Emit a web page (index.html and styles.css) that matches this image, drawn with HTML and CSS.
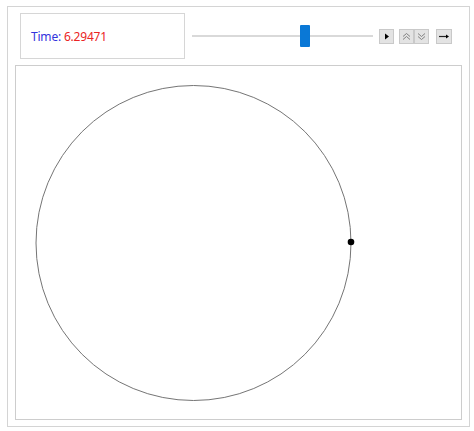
FILE: index.html
```html
<!DOCTYPE html>
<html>
<head>
<meta charset="utf-8">
<link rel="stylesheet" href="styles.css">
</head>
<body>
<div class="panel">
  <div class="header">
    <div class="timebox"><span class="text"><span class="label">Time: </span><span class="value">6.29471</span></span></div>
    <div class="slider"><div class="track"></div><div class="thumb"></div></div>
    <div class="buttons">
      <div class="btn">
        <svg width="13" height="13" viewBox="0 0 13 13"><path d="M5 3.5 L9 6.5 L5 9.5 Z" fill="#000"/></svg>
      </div>
      <div class="group">
        <div class="btn">
          <svg width="13" height="13" viewBox="0 0 13 13"><path d="M3 6.5 L6.5 3.5 L10 6.5 M3 9.5 L6.5 6.5 L10 9.5" fill="none" stroke="#777" stroke-width="0.9"/></svg>
        </div>
        <div class="btn">
          <svg width="13" height="13" viewBox="0 0 13 13"><path d="M3 3.5 L6.5 6.5 L10 3.5 M3 6.5 L6.5 9.5 L10 6.5" fill="none" stroke="#777" stroke-width="0.9"/></svg>
        </div>
      </div>
      <div class="btn wide">
        <svg width="14" height="13" viewBox="0 0 14 13"><path d="M2 6.5 H9" stroke="#222" stroke-width="1.2"/><path d="M9 4.5 L12 6.5 L9 8.5 Z" fill="#000"/></svg>
      </div>
    </div>
  </div>
  <div class="canvas">
    <svg class="plot" width="445" height="353" viewBox="0 0 445 353">
      <circle cx="177.5" cy="177" r="157.5" fill="none" stroke="#757575" stroke-width="1"/>
      <circle cx="335" cy="176" r="3.3" fill="#000"/>
    </svg>
  </div>
</div>
</body>
</html>
```
FILE: styles.css
```css
html, body {
  margin: 0;
  padding: 0;
  background: #fff;
}
.panel {
  margin: 6px 0 0 7px;
  width: 463px;
  height: 421px;
  border: 1px solid #d4d4d4;
  padding: 6px 7px;
  box-sizing: border-box;
  display: flex;
  flex-direction: column;
  gap: 6px;
}
.header {
  display: flex;
  align-items: center;
  padding-left: 5px;
  height: 46px;
}
.timebox {
  width: 165px;
  height: 46px;
  box-sizing: border-box;
  border: 1px solid #d6d6d6;
  display: flex;
  align-items: center;
  padding-left: 10px;
  font-family: "Noto Sans", "Open Sans", sans-serif;
  font-size: 12px;
  letter-spacing: -0.2px;
  white-space: pre;
}
.label { color: #3333dd; }
.value { color: #ea2424; }
.slider {
  position: relative;
  margin-left: 7px;
  width: 181px;
  height: 22px;
  display: flex;
  align-items: center;
}
.track {
  width: 100%;
  height: 2px;
  background: #d9d9d9;
}
.thumb {
  position: absolute;
  left: 108px;
  top: 0;
  width: 10px;
  height: 22px;
  background: #0a78d6;
  border-radius: 1px;
}
.buttons {
  display: flex;
  align-items: center;
  margin-left: 6px;
  gap: 5px;
}
.group {
  display: flex;
}
.btn {
  width: 15px;
  height: 15px;
  box-sizing: border-box;
  border: 1px solid #c9c9c9;
  background: #e3e3e3;
  display: flex;
  align-items: center;
  justify-content: center;
}
.btn.wide {
  width: 16px;
  margin-left: 2px;
}
.canvas {
  height: 355px;
  border: 1px solid #cdcdcd;
  box-sizing: border-box;
}
.plot {
  display: block;
}
```
